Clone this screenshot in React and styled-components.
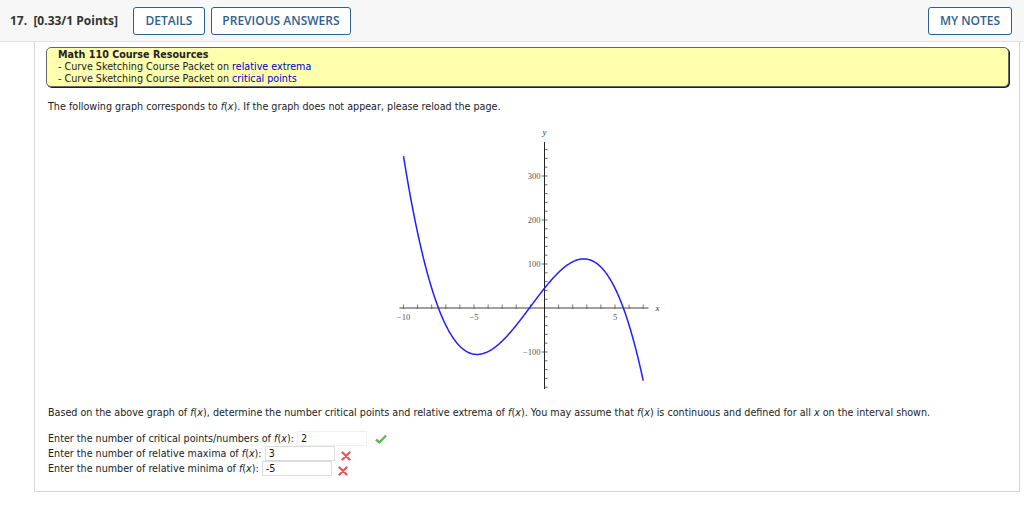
import React from 'react';
import styled, { createGlobalStyle } from 'styled-components';

const GlobalStyle = createGlobalStyle`
    body{
        margin: 0;
        background: #fff;
        font-family: "DejaVu Sans", Verdana, sans-serif;
    }
`;

const Header = styled.div`
    display: flex;
    align-items: center;
    height: 42px;
    box-sizing: border-box;
    padding: 0 12px 0 10px;
    background: #f7f7f7;
    border-bottom: 1px solid #e2e2e2;
    font-family: "Open Sans", sans-serif;
`;

const QTitle = styled.div`
    font-size: 12px;
    font-weight: 700;
    color: #333;
    margin-right: 15px;
`;

const HeadButton = styled.button`
    height: 28px;
    width: ${props => props.w}px;
    margin-right: 6px;
    margin-left: ${props => props.right ? 'auto' : '0'};
    box-sizing: border-box;
    background: #fff;
    border: 1.5px solid #2e5f8e;
    border-radius: 3px;
    color: #2e5f8e;
    font-family: "Open Sans", sans-serif;
    font-size: 12px;
    font-weight: 600;
    padding: 0;
    &:last-child{ margin-right: 0; }
`;

const Panel = styled.div`
    margin-left: 34px;
    width: 986px;
    height: 450px;
    box-sizing: border-box;
    border: 1px solid #d6d6d6;
    border-top: none;
    padding: 5px 10px 0 11px;
`;

const Resources = styled.div`
    background: #ffffad;
    border: 1px solid #666;
    border-radius: 5px;
    box-shadow: 1px 1px 0 #222;
    padding: 1px 11px 2px;
    height: 40px;
    box-sizing: border-box;
    font-size: 9.6px;
    line-height: 12px;
    color: #222;

    b{ font-weight: 700; }
    a{ color: #0000cc; text-decoration: none; }
`;

const Para = styled.p`
    margin: ${props => props.m || '0'};
    padding-left: 2px;
    font-size: 9.6px;
    line-height: 12px;
    color: #222;
`;

const GraphWrap = styled.div`
    display: flex;
    justify-content: center;
    margin-top: 12px;
    height: 282px;
`;

const Answers = styled.div`
    display: flex;
    flex-direction: column;
    margin-top: 12px;
    padding-left: 2px;
`;

const Row = styled.div`
    display: flex;
    align-items: center;
    height: 15px;
    font-size: 9.6px;
    color: #222;
    white-space: pre;
`;

const Field = styled.div`
    width: 70px;
    height: 15px;
    box-sizing: border-box;
    border: 1px solid ${props => props.faint ? '#f0f0f0' : '#dcdcdc'};
    padding: 1px 3px;
    font-size: 9.6px;
    line-height: 12px;
    color: #111;
`;

const Mark = styled.span`
    display: inline-flex;
    margin-left: ${props => props.gap}px;
    margin-top: ${props => props.dy || 0}px;
`;

const F = () => <><i>f</i>(<i>x</i>)</>;

const ox = 161.5;
const oy = 183;
const sx = 14.1;
const sy = 0.44;
const X = u => ox + u * sx;
const Y = v => oy - v * sy;
const f = x => -x * x * x - 3 * x * x + 40 * x + 45;

function Graph () {
    const pts = [];
    for (let u = -10; u <= 7.001; u += 0.05) {
        pts.push(`${X(u).toFixed(2)},${Y(f(u)).toFixed(2)}`);
    }
    const xt = [];
    for (let u = -10; u <= 7; u++) xt.push(u);
    const yt = [];
    for (let v = -180; v <= 360; v += 20) if (v !== 0) yt.push(v);
    const lbl = { fontFamily: '"Liberation Serif", serif', fontSize: 8.5, fill: '#555' };
    return (
        <svg width="290" height="270" viewBox="0 0 290 270">
            <line x1="16.5" y1={oy} x2="265.5" y2={oy} stroke="#a0a0a0" strokeWidth="2" />
            {xt.map(u => (
                <line key={u} x1={X(u)} y1={oy - 3.5} x2={X(u)} y2={oy + 1} stroke="#555" strokeWidth="0.8" />
            ))}
            {[-10, -5, 5].map(u => (
                <text key={u} x={X(u)} y={oy + 12} textAnchor="middle" style={lbl}>
                    {u < 0 ? `\u2212${-u}` : u}
                </text>
            ))}
            <line x1={ox} y1="17" x2={ox} y2="264" stroke="#222" strokeWidth="1" />
            {yt.map(v => (
                <line key={v} x1={v % 100 === 0 ? ox - 3 : ox} y1={Y(v)} x2={ox + 3} y2={Y(v)} stroke="#444" strokeWidth="0.8" />
            ))}
            {[-100, 100, 200, 300].map(v => (
                <text key={v} x={ox - 4} y={Y(v) + 3} textAnchor="end" style={lbl}>
                    {v < 0 ? `\u2212${-v}` : v}
                </text>
            ))}
            <text x={ox} y="10" textAnchor="middle" style={{ ...lbl, fontStyle: 'italic', fontSize: 9, fill: '#333' }}>y</text>
            <text x="274.5" y={oy + 3} textAnchor="middle" style={{ ...lbl, fontStyle: 'italic', fontSize: 9, fill: '#333' }}>x</text>
            <polyline points={pts.join(' ')} fill="none" stroke="#1f1fff" strokeWidth="1.5" />
        </svg>
    );
}

const Check = () => (
    <svg width="12" height="10" viewBox="0 0 12 10">
        <path d="M1 5.5 L4.5 8.5 L11 1.5" fill="none" stroke="#5cb85c" strokeWidth="2.4" strokeLinejoin="round" />
    </svg>
);

const Cross = () => (
    <svg width="10" height="10" viewBox="0 0 10 10">
        <path d="M1.5 1.5 L8.5 8.5 M8.5 1.5 L1.5 8.5" fill="none" stroke="#e35d5d" strokeWidth="2.4" strokeLinecap="round" />
    </svg>
);

function App () {
    return (
        <>
            <GlobalStyle />
            <Header>
                <QTitle>17.&nbsp; [0.33/1 Points]</QTitle>
                <HeadButton w={72}>DETAILS</HeadButton>
                <HeadButton w={140}>PREVIOUS ANSWERS</HeadButton>
                <HeadButton w={84} right>MY NOTES</HeadButton>
            </Header>
            <Panel>
                <Resources>
                    <b>Math 110 Course Resources</b><br />
                    - Curve Sketching Course Packet on <a href="#">relative extrema</a><br />
                    - Curve Sketching Course Packet on <a href="#">critical points</a>
                </Resources>
                <Para m="14px 0 0">
                    The following graph corresponds to <F />. If the graph does not appear, please reload the page.
                </Para>
                <GraphWrap>
                    <Graph />
                </GraphWrap>
                <Para>
                    Based on the above graph of <F />, determine the number critical points and relative extrema of <F />. You may assume that <F /> is continuous and defined for all <i>x</i> on the interval shown.
                </Para>
                <Answers>
                    <Row>
                        Enter the number of critical points/numbers of <F />:{' '}
                        <Field faint>2</Field>
                        <Mark gap={8}><Check /></Mark>
                    </Row>
                    <Row>
                        Enter the number of relative maxima of <F />:{' '}
                        <Field>3</Field>
                        <Mark gap={6} dy={5}><Cross /></Mark>
                    </Row>
                    <Row>
                        Enter the number of relative minima of <F />:{' '}
                        <Field>-5</Field>
                        <Mark gap={6} dy={5}><Cross /></Mark>
                    </Row>
                </Answers>
            </Panel>
        </>
    );
}

export default App;
